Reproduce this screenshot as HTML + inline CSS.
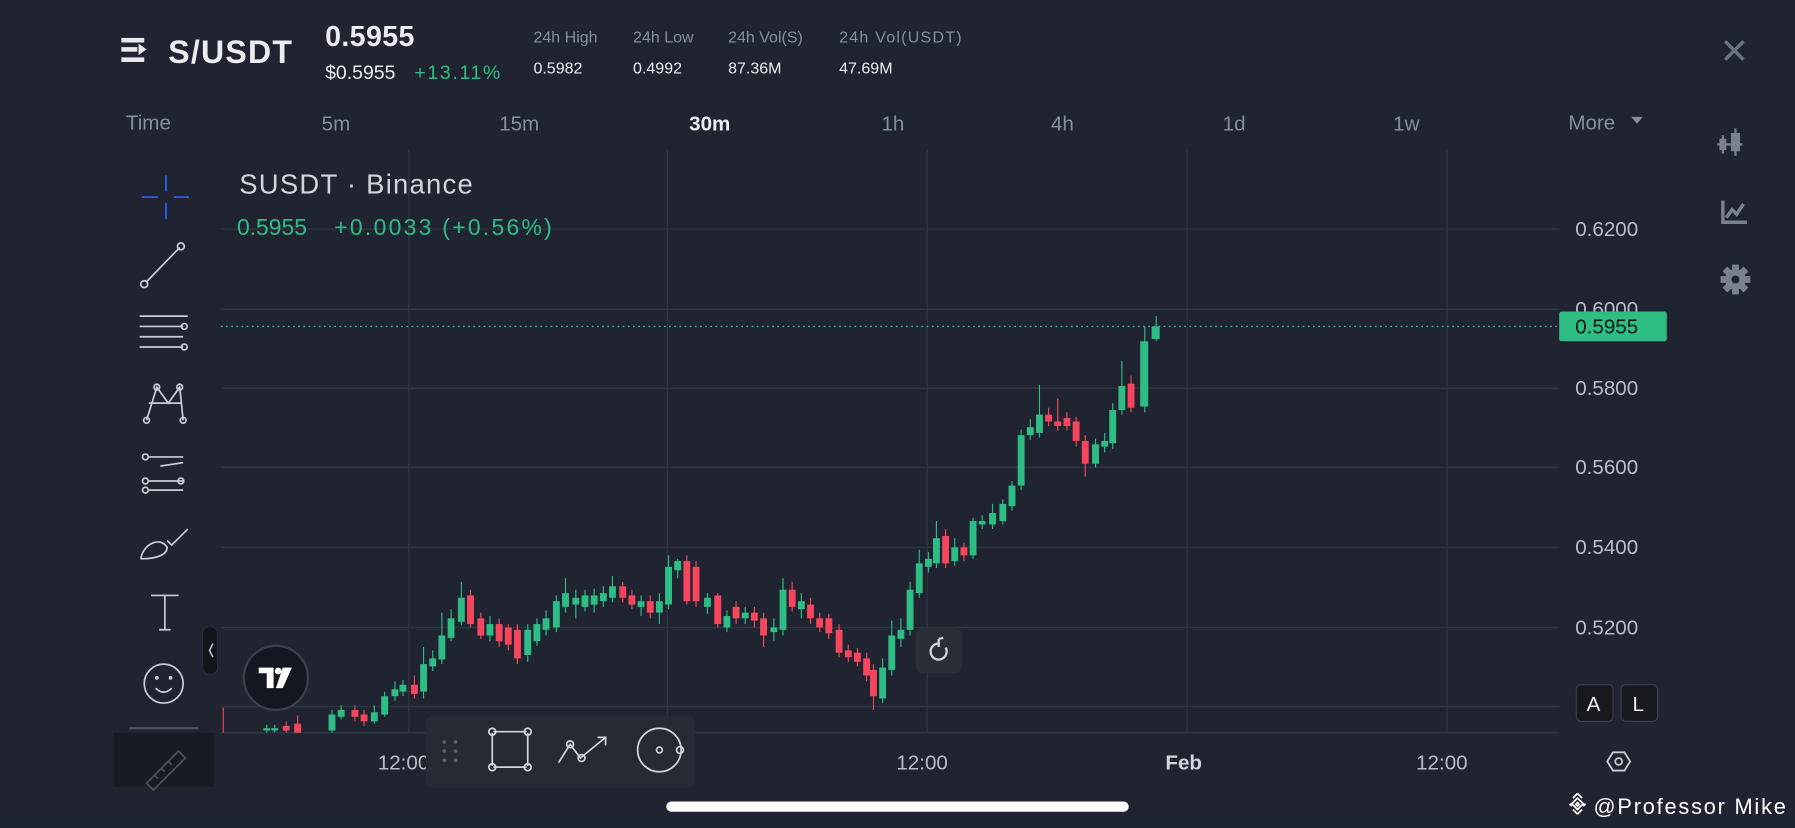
<!DOCTYPE html>
<html><head><meta charset="utf-8"><style>
html,body{margin:0;padding:0;background:#1f2430;width:1795px;height:828px;overflow:hidden}
svg{display:block}
text{font-family:"Liberation Sans",sans-serif}
</style></head><body>
<svg width="1795" height="828" viewBox="0 0 1568 723" xmlns="http://www.w3.org/2000/svg">
<rect width="1568" height="723" fill="#1f2430"/>
<defs><clipPath id="cp"><rect x="193" y="130" width="1170" height="510"/></clipPath></defs>
<!-- header -->
<g fill="#e8eaed"><rect x="106" y="33" width="20" height="4"/><rect x="106" y="41" width="14" height="4"/><rect x="106" y="50" width="20" height="4"/><path d="M121 38 l7 5 -7 5z"/></g>
<text x="147" y="55" font-size="28" font-weight="bold" fill="#eaecef" textLength="108">S/USDT</text>
<text x="284" y="40" font-size="25" font-weight="bold" fill="#eaecef" textLength="78">0.5955</text>
<text x="284" y="69" font-size="17" fill="#eaecef">$0.5955</text>
<text x="362" y="69" font-size="17" fill="#2ebd85" textLength="75">+13.11%</text>
<g font-size="14" fill="#848e9c"><text x="466" y="37">24h High</text><text x="553" y="37">24h Low</text><text x="636" y="37">24h Vol(S)</text><text x="733" y="37" textLength="107">24h Vol(USDT)</text></g>
<g font-size="14" fill="#eaecef"><text x="466" y="64">0.5982</text><text x="553" y="64">0.4992</text><text x="636" y="64">87.36M</text><text x="733" y="64">47.69M</text></g>
<path d="M1507 36 l16 16 M1523 36 l-16 16" stroke="#6b7280" stroke-width="3"/>
<!-- timeframes -->
<g font-size="18" fill="#848e9c"><text x="110" y="113">Time</text><text x="281" y="114">5m</text><text x="436" y="114">15m</text><text x="770" y="114">1h</text><text x="918" y="114">4h</text><text x="1068" y="114">1d</text><text x="1217" y="114">1w</text><text x="1370" y="113">More</text></g>
<text x="602" y="114" font-size="18" font-weight="bold" fill="#eaecef">30m</text>
<path d="M1425 102 h10 l-5 6z" fill="#848e9c"/>
<!-- right icons -->
<g fill="#7a808c"><rect x="1502" y="121" width="6" height="10"/><rect x="1504" y="118" width="2" height="16"/><rect x="1512" y="116" width="8" height="16"/><rect x="1515" y="112" width="2" height="24"/><rect x="1500" y="125" width="22" height="2"/></g>
<path d="M1505 175 v19 h21 M1508 190 l5 -7 4 4 6 -9" stroke="#7a808c" stroke-width="3" fill="none"/>
<g fill="#7a808c"><circle cx="1516" cy="244" r="9"/><rect x="1513" y="231" width="6" height="26"/><rect x="1503" y="241" width="26" height="6"/><rect x="1513" y="231" width="6" height="26" transform="rotate(45 1516 244)"/><rect x="1513" y="231" width="6" height="26" transform="rotate(-45 1516 244)"/></g><circle cx="1516" cy="244" r="3.5" fill="#1f2430"/>
<!-- grid -->
<g stroke="#2e3440" stroke-width="1.2">
<path d="M357 130V640M583 130V640M810 130V640M1037 130V640M1264 130V640"/>
<path d="M193 200H1362M193 270H1362M193 339H1362M193 408H1362M193 478H1362M193 548H1362M193 617H1362M193 640H1362"/>
</g>
<g font-size="18" fill="#b7bdc6"><text x="1376" y="206">0.6200</text><text x="1376" y="276">0.6000</text><text x="1376" y="345">0.5800</text><text x="1376" y="414">0.5600</text><text x="1376" y="484">0.5400</text><text x="1376" y="554">0.5200</text></g>
<line x1="193" y1="285" x2="1362" y2="285" stroke="#2ebd85" stroke-width="1.2" stroke-dasharray="1.5 3"/>
<rect x="1362" y="272" width="94" height="26" rx="2" fill="#2ebd85"/>
<text x="1376" y="291" font-size="18" fill="#0b1a12">0.5955</text>
<text x="209" y="169" font-size="24" fill="#d1d4dc" textLength="204">SUSDT · Binance</text>
<text x="207" y="205" font-size="20" fill="#2ebd85">0.5955</text>
<text x="292" y="205" font-size="20" fill="#2ebd85" textLength="190">+0.0033 (+0.56%)</text>
<!-- candles -->
<g clip-path="url(#cp)">
<g fill="#2ebd85" stroke="#2ebd85" stroke-width="1">
<path d="M233 633V640M240 633V640M290 620V640M298 616V628M327 616V632M336 604V626M345 595V612M352 594V608M370 565V610M378 568V586M386 535V580M394 532V560M403 508V546M428 538V560M461 545V578M469 540V564M477 533V555M486 520V552M494 505V535M503 515V540M511 515V534M519 514V535M527 512V530M535 503V526M560 520V538M576 518V545M584 485V532M592 488V505M618 518V536M635 533V552M651 530V545M676 540V560M684 505V555M700 518V540M771 575V614M779 542V590M787 540V565M795 508V555M803 480V522M811 482V500M818 455V496M834 470V494M850 452V488M858 450V462M867 440V462M876 436V458M884 420V446M892 375V428M900 366V384M908 336V382M957 383V408M965 378V395M972 352V392M980 315V362M1000 285V360M1010 276V298"/>
<g stroke="none">
<rect x="230" y="636" width="6" height="2"/><rect x="237" y="636" width="6" height="2"/><rect x="287" y="624" width="6" height="14"/><rect x="295" y="620" width="6" height="6"/><rect x="324" y="622" width="6" height="8"/><rect x="333" y="608" width="6" height="16"/><rect x="342" y="602" width="6" height="6"/><rect x="349" y="598" width="6" height="6"/><rect x="367" y="580" width="6" height="24"/><rect x="375" y="575" width="6" height="7"/><rect x="383" y="555" width="6" height="21"/><rect x="391" y="540" width="6" height="17"/><rect x="400" y="522" width="6" height="21"/><rect x="425" y="545" width="6" height="10"/><rect x="458" y="550" width="6" height="22"/><rect x="466" y="545" width="6" height="15"/><rect x="474" y="540" width="6" height="10"/><rect x="483" y="525" width="6" height="23"/><rect x="491" y="518" width="6" height="12"/><rect x="500" y="522" width="6" height="6"/><rect x="508" y="520" width="6" height="10"/><rect x="516" y="520" width="6" height="8"/><rect x="524" y="518" width="6" height="7"/><rect x="532" y="512" width="6" height="10"/><rect x="557" y="525" width="6" height="5"/><rect x="573" y="525" width="6" height="10"/><rect x="581" y="495" width="6" height="33"/><rect x="589" y="490" width="6" height="8"/><rect x="615" y="522" width="6" height="8"/><rect x="632" y="538" width="6" height="10"/><rect x="648" y="535" width="6" height="5"/><rect x="673" y="548" width="6" height="4"/><rect x="681" y="515" width="6" height="35"/><rect x="697" y="525" width="6" height="7"/><rect x="768" y="583" width="6" height="27"/><rect x="776" y="555" width="6" height="30"/><rect x="784" y="550" width="6" height="8"/><rect x="792" y="515" width="6" height="35"/><rect x="800" y="492" width="6" height="26"/><rect x="808" y="488" width="6" height="7"/><rect x="815" y="470" width="6" height="22"/><rect x="831" y="478" width="6" height="12"/><rect x="847" y="455" width="6" height="30"/><rect x="855" y="455" width="6" height="3"/><rect x="864" y="448" width="6" height="10"/><rect x="873" y="440" width="6" height="15"/><rect x="881" y="424" width="6" height="18"/><rect x="889" y="380" width="6" height="44"/><rect x="897" y="373" width="6" height="7"/><rect x="905" y="362" width="6" height="16"/><rect x="954" y="388" width="6" height="17"/><rect x="962" y="385" width="6" height="5"/><rect x="969" y="358" width="6" height="29"/><rect x="977" y="337" width="6" height="21"/><rect x="996" y="298" width="7" height="57"/><rect x="1006" y="285" width="7" height="11"/>
</g></g>
<g fill="#f6465d" stroke="#f6465d" stroke-width="1">
<path d="M195 618V640M250 630V640M260 625V640M310 616V630M318 620V634M362 590V610M411 515V548M420 535V558M436 540V565M444 545V568M452 545V580M544 508V526M552 515V532M568 520V540M600 485V528M608 490V530M627 518V548M643 525V545M659 530V548M667 535V565M692 508V534M708 522V545M716 535V552M724 536V558M733 545V574M741 563V578M749 566V582M757 570V595M763 580V620M826 462V496M842 474V490M916 356V372M924 348V376M932 360V376M940 364V390M948 380V416M988 328V360"/>
<g stroke="none">
<rect x="247" y="634" width="6" height="4"/><rect x="257" y="632" width="6" height="8"/><rect x="307" y="620" width="6" height="6"/><rect x="315" y="624" width="6" height="6"/><rect x="359" y="598" width="6" height="8"/><rect x="408" y="520" width="6" height="25"/><rect x="417" y="540" width="6" height="15"/><rect x="433" y="545" width="6" height="15"/><rect x="441" y="548" width="6" height="15"/><rect x="449" y="550" width="6" height="25"/><rect x="541" y="512" width="6" height="10"/><rect x="549" y="520" width="6" height="8"/><rect x="565" y="525" width="6" height="10"/><rect x="597" y="490" width="6" height="35"/><rect x="605" y="495" width="6" height="30"/><rect x="624" y="520" width="6" height="25"/><rect x="640" y="530" width="6" height="10"/><rect x="656" y="535" width="6" height="7"/><rect x="664" y="540" width="6" height="15"/><rect x="689" y="515" width="6" height="15"/><rect x="705" y="528" width="6" height="12"/><rect x="713" y="540" width="6" height="8"/><rect x="721" y="540" width="6" height="13"/><rect x="730" y="550" width="6" height="20"/><rect x="738" y="568" width="6" height="6"/><rect x="746" y="570" width="6" height="8"/><rect x="754" y="575" width="6" height="15"/><rect x="760" y="585" width="6" height="23"/><rect x="823" y="468" width="6" height="24"/><rect x="839" y="478" width="6" height="7"/><rect x="913" y="362" width="6" height="6"/><rect x="921" y="368" width="6" height="4"/><rect x="929" y="365" width="6" height="7"/><rect x="937" y="368" width="6" height="17"/><rect x="945" y="385" width="6" height="20"/><rect x="985" y="335" width="6" height="21"/>
</g></g>
</g>
<!-- time axis -->
<g font-size="18" fill="#b7bdc6"><text x="330" y="672">12:00</text><text x="783" y="672">12:00</text><text x="1237" y="672">12:00</text></g>
<text x="1018" y="672" font-size="18" font-weight="bold" fill="#d1d4dc">Feb</text>
<path d="M1404 665 l5 -8 h10 l5 8 -5 8 h-10z" fill="none" stroke="#c8ccd4" stroke-width="1.6"/><circle cx="1414" cy="665" r="3" fill="none" stroke="#c8ccd4" stroke-width="1.5"/>
<!-- A L -->
<rect x="1377" y="598" width="32" height="32" rx="4" fill="#161a1f" stroke="#3a404c"/><text x="1386" y="621" font-size="18" fill="#eaecef">A</text>
<rect x="1416" y="598" width="32" height="32" rx="4" fill="#161a1f" stroke="#3a404c"/><text x="1426" y="621" font-size="18" fill="#eaecef">L</text>
<!-- left tools -->
<g stroke="#2962ff" stroke-width="1.5"><path d="M145 153V167M145 177V191M124 172H138M152 172H165"/></g>
<g fill="none" stroke="#c8ccd4" stroke-width="1.5">
<path d="M128 246 L157 216"/><circle cx="126" cy="248" r="3"/><circle cx="158" cy="215" r="3"/>
<path d="M122 276H164M122 285H160M122 294H160M122 303H160"/><circle cx="161" cy="285" r="2.5"/><circle cx="161" cy="303" r="2.5"/>
<path d="M128 367 L137 338 L147 352 L157 338 L160 367 M130 352 H158"/><circle cx="128" cy="367" r="2.5"/><circle cx="137" cy="338" r="2.5"/><circle cx="157" cy="338" r="2.5"/><circle cx="160" cy="367" r="2.5"/>
<path d="M130 399H160M140 407L160 404M130 420H160M130 428H160" /><circle cx="127" cy="399" r="2.5"/><circle cx="127" cy="420" r="2.5"/><circle cx="127" cy="428" r="2.5"/><circle cx="158" cy="420" r="2.5"/>
<path d="M123 488 C125 475 140 468 146 478 C146 484 138 488 123 488 M146 472 l4 4 l14 -14"/>
<path d="M132 520H156M144 520V550M139 550H149"/>
<circle cx="143" cy="597" r="17"/><path d="M136 601 q7 7 14 0"/>
</g>
<circle cx="137" cy="592" r="1.6" fill="#c8ccd4"/><circle cx="149" cy="592" r="1.6" fill="#c8ccd4"/>
<rect x="113" y="635" width="60" height="2" fill="#4a505c"/>
<rect x="99" y="640" width="88" height="47" fill="#171b22"/>
<path d="M128 684 l28 -28 6 6 -28 28z M135 677 l3 3 M141 671 l3 3 M147 665 l3 3" fill="none" stroke="#4a505c" stroke-width="1.5"/>
<rect x="177" y="547" width="13" height="42" rx="6" fill="#121519" stroke="#2a2f38"/>
<path d="M186 562 l-3 6 3 6" fill="none" stroke="#c8ccd4" stroke-width="1.3"/>
<circle cx="241" cy="592" r="28" fill="#131722" stroke="#3a3f4a" stroke-width="2"/>
<path d="M226 583 h13 v18 h-6 v-13 h-7z M247 583 h8 l-8 18 h-6z" fill="#fff"/><circle cx="243" cy="586" r="3" fill="#fff"/>
<rect x="800" y="548" width="40" height="40" rx="6" fill="#2a2e39"/>
<path d="M820 562 a7 7 0 1 0 6 3.5 M820 558 v7 M820 558 l4 -1" fill="none" stroke="#d1d4dc" stroke-width="2"/>
<!-- floating toolbar -->
<rect x="372" y="625" width="235" height="63" rx="6" fill="#252a34"/>
<g fill="#5b616d"><circle cx="388" cy="648" r="1.6"/><circle cx="398" cy="648" r="1.6"/><circle cx="388" cy="656" r="1.6"/><circle cx="398" cy="656" r="1.6"/><circle cx="388" cy="664" r="1.6"/><circle cx="398" cy="664" r="1.6"/></g>
<g fill="none" stroke="#d1d4dc" stroke-width="1.5">
<path d="M431 639 H460 M431 670 H460 M430 640 V669 M461 640 V669"/><circle cx="430" cy="639" r="3"/><circle cx="461" cy="639" r="3"/><circle cx="430" cy="670" r="3"/><circle cx="461" cy="670" r="3"/>
<path d="M488 666 L498 650 L507 662 L529 644 M522 644 h7 v7"/><circle cx="498" cy="650" r="3"/><circle cx="508" cy="662" r="3"/>
<circle cx="576" cy="655" r="19"/><circle cx="576" cy="655" r="2.5"/><circle cx="594" cy="655" r="3"/>
</g>
<!-- home bar & watermark -->
<rect x="582" y="700" width="404" height="9" rx="4.5" fill="#fff"/>
<path d="M1378 697 l5 5 -5 5 -5 -5z M1378 701 l1.5 1.5 -1.5 1.5 -1.5 -1.5z M1371 702 l2 2 M1385 702 l-2 2 M1378 711 l-4 -4 M1378 711 l4 -4 M1378 693 l-4 4 M1378 693 l4 4" fill="none" stroke="#fff" stroke-width="1.5"/>
<text x="1392" y="711" font-size="19" fill="#fff" textLength="168">@Professor Mike</text>
</svg>
</body></html>
